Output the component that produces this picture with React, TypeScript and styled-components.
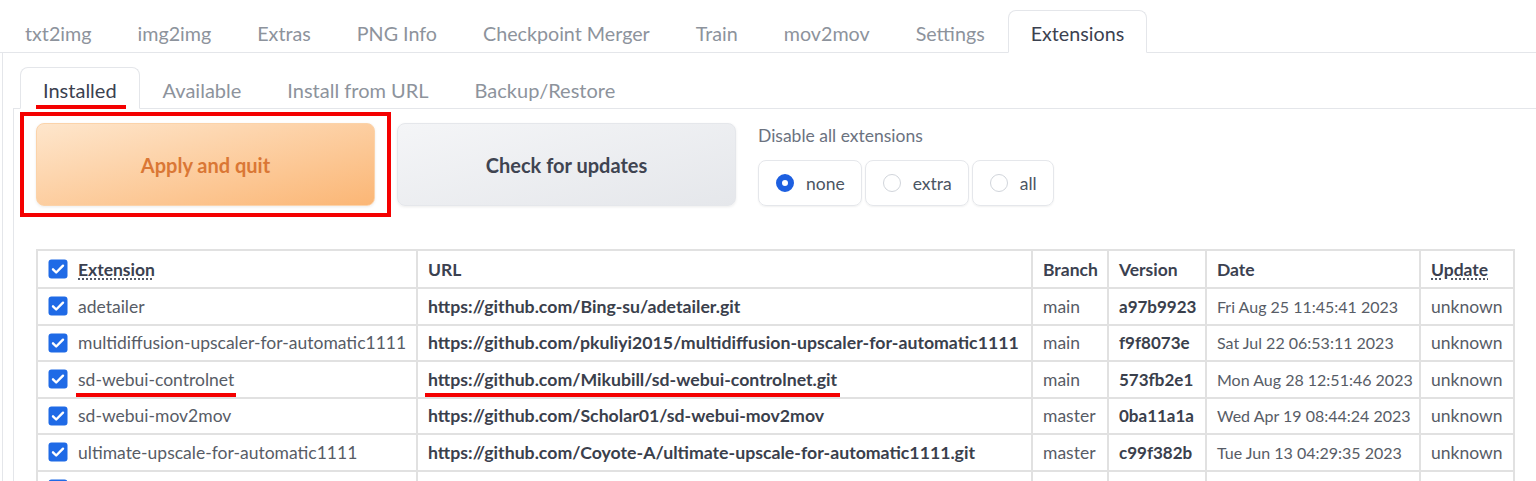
import React, { ReactElement } from "react";
import styled, { createGlobalStyle } from "styled-components";

const GlobalStyle = createGlobalStyle`
  html, body {
    margin: 0;
    padding: 0;
    background: #ffffff;
    overflow: hidden;
    font-family: Lato, "Noto Sans", Arial, sans-serif;
  }
`;

interface Extension {
  name: string;
  url: string;
  branch: string;
  version: string;
  date: string;
  update: string;
  mark?: boolean;
}

const extensions: Extension[] = [
  {
    name: "adetailer",
    url: "https://github.com/Bing-su/adetailer.git",
    branch: "main",
    version: "a97b9923",
    date: "Fri Aug 25 11:45:41 2023",
    update: "unknown"
  },
  {
    name: "multidiffusion-upscaler-for-automatic1111",
    url: "https://github.com/pkuliyi2015/multidiffusion-upscaler-for-automatic1111",
    branch: "main",
    version: "f9f8073e",
    date: "Sat Jul 22 06:53:11 2023",
    update: "unknown"
  },
  {
    name: "sd-webui-controlnet",
    url: "https://github.com/Mikubill/sd-webui-controlnet.git",
    branch: "main",
    version: "573fb2e1",
    date: "Mon Aug 28 12:51:46 2023",
    update: "unknown",
    mark: true
  },
  {
    name: "sd-webui-mov2mov",
    url: "https://github.com/Scholar01/sd-webui-mov2mov",
    branch: "master",
    version: "0ba11a1a",
    date: "Wed Apr 19 08:44:24 2023",
    update: "unknown"
  },
  {
    name: "ultimate-upscale-for-automatic1111",
    url: "https://github.com/Coyote-A/ultimate-upscale-for-automatic1111.git",
    branch: "master",
    version: "c99f382b",
    date: "Tue Jun 13 04:29:35 2023",
    update: "unknown"
  },
  {
    name: "stable-diffusion-webui-wd14-tagger",
    url: "https://github.com/toriato/stable-diffusion-webui-wd14-tagger.git",
    branch: "master",
    version: "3ba3a73b",
    date: "Sat May 20 11:12:35 2023",
    update: "unknown"
  }
];

const topTabs = [
  "txt2img",
  "img2img",
  "Extras",
  "PNG Info",
  "Checkpoint Merger",
  "Train",
  "mov2mov",
  "Settings",
  "Extensions"
];

const innerTabs = ["Installed", "Available", "Install from URL", "Backup/Restore"];

const columns = [380, 615, 76, 98, 214, 94];

const Page = styled.div`
  width: 1536px;
  padding-left: 2px;
  box-sizing: border-box;
`;

const TabNav = styled.div<{ $inset?: number }>`
  display: flex;
  align-items: flex-end;
  padding-left: ${p => p.$inset ?? 0}px;
  border-bottom: 1px solid #e4e6ea;
`;

const TopNav = styled(TabNav)`
  padding-top: 10px;
  margin-left: -2px;
  padding-left: 2px;
`;

const Tab = styled.div<{ $active?: boolean; $height: number; $size: number }>`
  position: relative;
  display: flex;
  align-items: center;
  height: ${p => p.$height}px;
  box-sizing: border-box;
  padding: 3px 22px 0;
  margin-bottom: -1px;
  font-size: ${p => p.$size}px;
  color: ${p => (p.$active ? "#3b4150" : "#8d939c")};
  background: ${p => (p.$active ? "#ffffff" : "transparent")};
  border: 1px solid ${p => (p.$active ? "#e4e6ea" : "transparent")};
  border-bottom-color: ${p => (p.$active ? "#ffffff" : "transparent")};
  border-radius: 8px 8px 0 0;
  white-space: nowrap;
`;

const Panel = styled.div`
  border-left: 1px solid #e4e6ea;
  padding: 14px 0 0 10px;
`;

const InnerPanel = styled.div`
  border-left: 1px solid #e4e6ea;
  padding: 14px 0 0 22px;
  height: 380px;
`;

const Marked = styled.span<{ $left: number; $right: number; $bottom: number }>`
  position: relative;
  &::after {
    content: "";
    position: absolute;
    left: ${p => p.$left}px;
    right: ${p => p.$right}px;
    bottom: ${p => p.$bottom}px;
    height: 4px;
    background: #f40000;
  }
`;

const ActionRow = styled.div`
  display: flex;
  align-items: flex-start;
  gap: 22px;
`;

const Highlight = styled.div`
  position: relative;
  &::after {
    content: "";
    position: absolute;
    left: -16px;
    right: -16px;
    top: -11px;
    bottom: -11px;
    border: 4px solid #f40000;
    pointer-events: none;
  }
`;

const Button = styled.button<{ $primary?: boolean }>`
  width: 339px;
  height: 83px;
  border-radius: 8px;
  font-family: inherit;
  font-size: 20px;
  font-weight: 700;
  cursor: pointer;
  color: ${p => (p.$primary ? "#da7735" : "#3f4451")};
  background: ${p =>
    p.$primary
      ? "linear-gradient(to bottom right, #fee6cc, #fbb675)"
      : "linear-gradient(to bottom right, #f4f5f7, #e5e7eb)"};
  border: 1px solid ${p => (p.$primary ? "#fbd3aa" : "#e5e7eb")};
  box-shadow: 0 1px 3px rgba(0, 0, 0, 0.08);
`;

const RadioBlock = styled.div`
  display: flex;
  flex-direction: column;
  padding-top: 3px;
`;

const RadioLabel = styled.div`
  font-size: 17.5px;
  line-height: 20px;
  color: #6b7280;
  margin-bottom: 14px;
`;

const RadioGroup = styled.div`
  display: flex;
  gap: 3px;
`;

const RadioOption = styled.label`
  display: flex;
  align-items: center;
  gap: 12px;
  height: 46px;
  box-sizing: border-box;
  padding: 0 16px 0 17px;
  border: 1px solid #e5e7eb;
  border-radius: 8px;
  box-shadow: 0 1px 2px rgba(0, 0, 0, 0.06);
  font-size: 17.5px;
  color: #4b5563;
`;

const RadioDot = styled.span<{ $checked?: boolean }>`
  width: 18px;
  height: 18px;
  box-sizing: border-box;
  border-radius: 50%;
  background: #ffffff;
  border: ${p => (p.$checked ? "6px solid #1d5fe0" : "1px solid #d1d5db")};
`;

const Table = styled.table`
  margin-top: 43px;
  width: 1477px;
  table-layout: fixed;
  border-collapse: collapse;
  font-size: 17.5px;
`;

const Col = styled.col<{ $w: number }>`
  width: ${p => p.$w}px;
`;

const HeadCell = styled.th`
  height: 36px;
  padding: 0 10px;
  text-align: left;
  font-weight: 700;
  font-size: 17.5px;
  color: #3b4150;
  border: 2px solid #e1e1e1;
  white-space: nowrap;
  overflow: hidden;
`;

const Cell = styled.td<{ $strong?: boolean; $tone?: string; $size?: number }>`
  height: 34.5px;
  padding: 0 10px;
  border: 2px solid #e1e1e1;
  white-space: nowrap;
  overflow: hidden;
  font-size: ${p => p.$size ?? 17.5}px;
  font-weight: ${p => (p.$strong ? 700 : 400)};
  color: ${p => p.$tone ?? "#575c66"};
`;

const Abbr = styled.span`
  text-decoration: underline dotted;
  text-underline-offset: 3px;
`;

const CheckRow = styled.div`
  display: flex;
  align-items: center;
  gap: 10px;
`;

function CheckBox(): ReactElement {
  return (
    <svg width="20" height="20" viewBox="0 0 20 20" style={{ flexShrink: 0 }}>
      <rect x="0.5" y="0.5" width="19" height="19" rx="3" fill="#1f6ae6" />
      <path
        d="M5 10.3l3.2 3.2L15 6.7"
        fill="none"
        stroke="#ffffff"
        strokeWidth="2.4"
        strokeLinecap="round"
        strokeLinejoin="round"
      />
    </svg>
  );
}

function App(): ReactElement {
  return (
    <Page>
      <GlobalStyle />
      <TopNav>
        {topTabs.map(t => (
          <Tab key={t} $height={43} $size={19.7} $active={t === "Extensions"}>
            {t}
          </Tab>
        ))}
      </TopNav>
      <Panel>
        <TabNav $inset={7}>
          {innerTabs.map(t => (
            <Tab key={t} $height={42} $size={20} $active={t === "Installed"}>
              {t === "Installed" ? (
                <Marked $left={-7} $right={-9} $bottom={-7}>
                  {t}
                </Marked>
              ) : (
                t
              )}
            </Tab>
          ))}
        </TabNav>
        <InnerPanel>
          <ActionRow>
            <Highlight>
              <Button $primary>Apply and quit</Button>
            </Highlight>
            <Button>Check for updates</Button>
            <RadioBlock>
              <RadioLabel>Disable all extensions</RadioLabel>
              <RadioGroup>
                <RadioOption>
                  <RadioDot $checked />
                  none
                </RadioOption>
                <RadioOption>
                  <RadioDot />
                  extra
                </RadioOption>
                <RadioOption>
                  <RadioDot />
                  all
                </RadioOption>
              </RadioGroup>
            </RadioBlock>
          </ActionRow>
          <Table>
            <colgroup>
              {columns.map((w, i) => (
                <Col key={i} $w={w} />
              ))}
            </colgroup>
            <thead>
              <tr>
                <HeadCell>
                  <CheckRow>
                    <CheckBox />
                    <Abbr>Extension</Abbr>
                  </CheckRow>
                </HeadCell>
                <HeadCell>URL</HeadCell>
                <HeadCell>Branch</HeadCell>
                <HeadCell>Version</HeadCell>
                <HeadCell>Date</HeadCell>
                <HeadCell>
                  <Abbr>Update</Abbr>
                </HeadCell>
              </tr>
            </thead>
            <tbody>
              {extensions.map(ext => (
                <tr key={ext.name}>
                  <Cell>
                    <CheckRow>
                      <CheckBox />
                      {ext.mark ? (
                        <Marked $left={-2} $right={-2} $bottom={-7}>
                          {ext.name}
                        </Marked>
                      ) : (
                        ext.name
                      )}
                    </CheckRow>
                  </Cell>
                  <Cell $strong $tone="#3a404c" $size={17.7}>
                    {ext.mark ? (
                      <Marked $left={-3} $right={-3} $bottom={-7}>
                        {ext.url}
                      </Marked>
                    ) : (
                      ext.url
                    )}
                  </Cell>
                  <Cell>{ext.branch}</Cell>
                  <Cell $strong $tone="#3a404c" $size={17}>
                    {ext.version}
                  </Cell>
                  <Cell $size={16}>{ext.date}</Cell>
                  <Cell>{ext.update}</Cell>
                </tr>
              ))}
            </tbody>
          </Table>
        </InnerPanel>
      </Panel>
    </Page>
  );
}

export default App;
